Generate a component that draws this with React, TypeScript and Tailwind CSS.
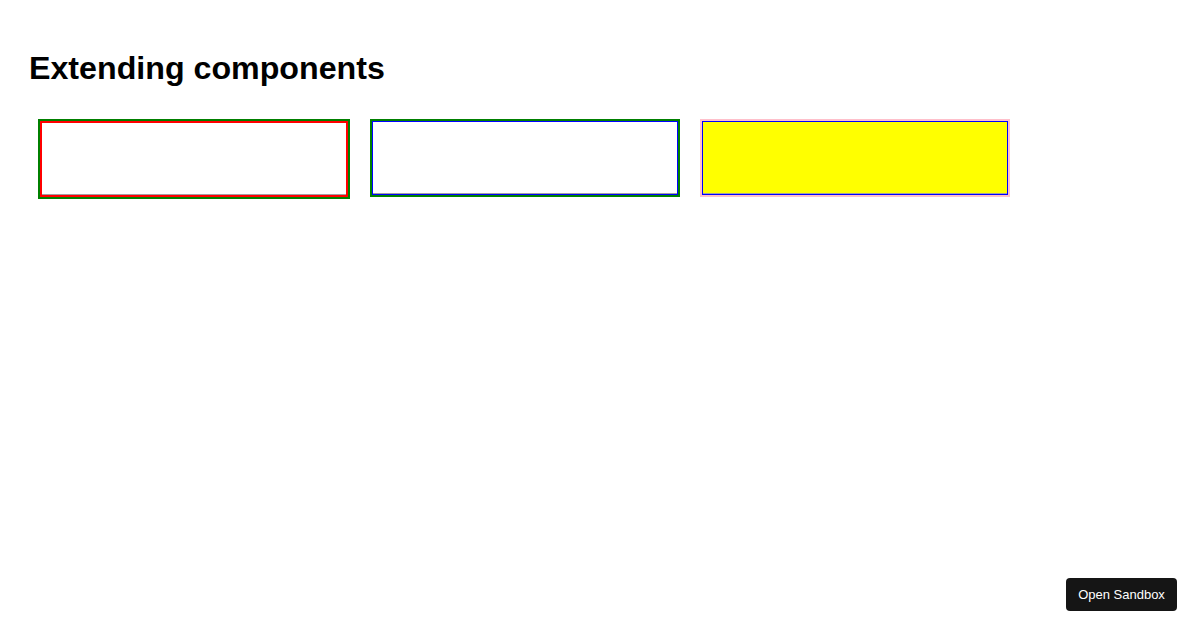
const boxes = [
  "outline-2 outline-[#008000] border-2 border-[#ff0000] bg-white",
  "outline-2 outline-[#008000] border border-[#0000ff] bg-white",
  "outline-2 outline-[#ffc0cb] border border-[#0000ff] bg-[#ffff00]",
]

export default function App() {
  return (
    <div className="relative h-[630px] w-[1200px] bg-white font-['Liberation_Sans',Arial,sans-serif] text-black">
      <div className="px-[29px] pt-[50px]">
        <h1 className="text-[32.2px] font-bold leading-[37px]">Extending components</h1>

        {/* Extended boxes */}
        <div className="mt-[34px] flex items-start gap-6 pl-[11px]">
          {boxes.map((cls, i) => (
            <div key={i} className={`outline-solid ${cls}`}>
              <div className="h-[72px] w-[304px] shadow-[inset_0_-1px_0_#a0a0a0]" />
            </div>
          ))}
        </div>
      </div>

      <button className="absolute bottom-[19px] right-[23px] flex h-[33px] w-[111px] items-center justify-center rounded-[4px] bg-[#151515] text-[13px] text-white">
        Open Sandbox
      </button>
    </div>
  )
}
